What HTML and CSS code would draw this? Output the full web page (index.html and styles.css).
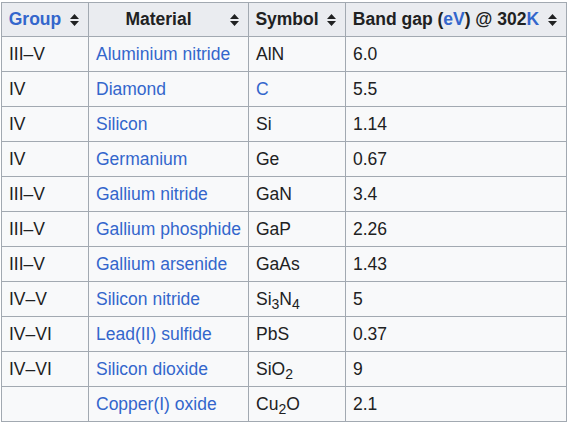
FILE: index.html
```html
<!DOCTYPE html>
<html>
<head>
<meta charset="utf-8">
<link rel="stylesheet" href="styles.css">
</head>
<body>
<table class="wikitable">
  <colgroup>
    <col class="c-group">
    <col class="c-mat">
    <col class="c-sym">
    <col class="c-gap">
  </colgroup>
  <thead>
    <tr>
      <th><div class="hd"><span class="ht"><a>Group</a></span><svg class="sort" viewBox="0 0 9 12"><path d="M0 5 L4.5 0 L9 5 Z M0 7 L9 7 L4.5 12 Z"/></svg></div></th>
      <th><div class="hd"><span class="ht">Material</span><svg class="sort" viewBox="0 0 9 12"><path d="M0 5 L4.5 0 L9 5 Z M0 7 L9 7 L4.5 12 Z"/></svg></div></th>
      <th><div class="hd"><span class="ht">Symbol</span><svg class="sort" viewBox="0 0 9 12"><path d="M0 5 L4.5 0 L9 5 Z M0 7 L9 7 L4.5 12 Z"/></svg></div></th>
      <th><div class="hd"><span class="ht">Band gap (<a>eV</a>) @ 302<a>K</a></span><svg class="sort" viewBox="0 0 9 12"><path d="M0 5 L4.5 0 L9 5 Z M0 7 L9 7 L4.5 12 Z"/></svg></div></th>
    </tr>
  </thead>
  <tbody>
    <tr><td>III–V</td><td><a>Aluminium nitride</a></td><td>AlN</td><td>6.0</td></tr>
    <tr><td>IV</td><td><a>Diamond</a></td><td><a>C</a></td><td>5.5</td></tr>
    <tr><td>IV</td><td><a>Silicon</a></td><td>Si</td><td>1.14</td></tr>
    <tr><td>IV</td><td><a>Germanium</a></td><td>Ge</td><td>0.67</td></tr>
    <tr><td>III–V</td><td><a>Gallium nitride</a></td><td>GaN</td><td>3.4</td></tr>
    <tr><td>III–V</td><td><a>Gallium phosphide</a></td><td>GaP</td><td>2.26</td></tr>
    <tr><td>III–V</td><td><a>Gallium arsenide</a></td><td>GaAs</td><td>1.43</td></tr>
    <tr><td>IV–V</td><td><a>Silicon nitride</a></td><td>Si<sub>3</sub>N<sub>4</sub></td><td>5</td></tr>
    <tr><td>IV–VI</td><td><a>Lead(II) sulfide</a></td><td>PbS</td><td>0.37</td></tr>
    <tr><td>IV–VI</td><td><a>Silicon dioxide</a></td><td>SiO<sub>2</sub></td><td>9</td></tr>
    <tr><td></td><td><a>Copper(I) oxide</a></td><td>Cu<sub>2</sub>O</td><td>2.1</td></tr>
  </tbody>
</table>
</body>
</html>
```

FILE: styles.css
```css
html, body {
  background: #ffffff;
}
body {
  margin: 2px 0 0 1px;
  font-family: "Liberation Sans", Arial, Helvetica, sans-serif;
  font-size: 17.5px;
  color: #202122;
}
.wikitable {
  border-collapse: collapse;
  table-layout: fixed;
  width: 566px;
  background: #f8f9fa;
  border: 1px solid #a2a9b1;
}
.c-group { width: 87px; }
.c-mat { width: 160px; }
.c-sym { width: 97px; }
.c-gap { width: 221px; }
th, td {
  border: 1px solid #a2a9b1;
  vertical-align: middle;
  white-space: nowrap;
}
th {
  background: #eaecf0;
  font-weight: bold;
  height: 34px;
  padding: 0 9px 0 6px;
  box-sizing: border-box;
}
td {
  height: 34px;
  padding: 0 7px;
  line-height: 20px;
}
.hd {
  display: flex;
  align-items: center;
}
.ht {
  flex: 1;
  text-align: center;
  margin-right: 8px;
}
.sort {
  width: 9px;
  height: 12px;
  flex: none;
  fill: #202122;
}
a {
  color: #3366cc;
  text-decoration: none;
}
sub {
  font-size: 0.8em;
  line-height: 0;
  vertical-align: -0.3em;
}
```
